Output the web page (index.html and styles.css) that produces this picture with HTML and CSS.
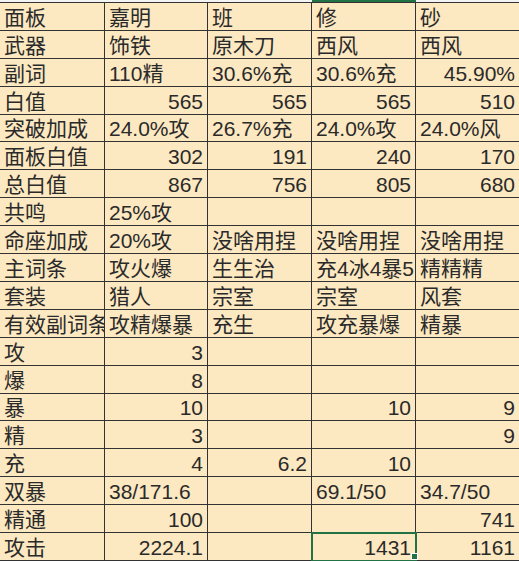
FILE: index.html
```html
<!DOCTYPE html>
<html lang="zh">
<head>
<meta charset="utf-8">
<link rel="stylesheet" href="styles.css">
</head>
<body>
<div class="sheet">
  <div class="colhead">
    <div class="ch"></div><div class="ch"></div><div class="ch"></div><div class="ch ch-sel"></div><div class="ch"></div>
  </div>
  <div class="grid">
    <div class="c">面板</div><div class="c">嘉明</div><div class="c">班</div><div class="c">修</div><div class="c">砂</div>
    <div class="c">武器</div><div class="c">饰铁</div><div class="c">原木刀</div><div class="c">西风</div><div class="c">西风</div>
    <div class="c">副词</div><div class="c">110精</div><div class="c">30.6%充</div><div class="c">30.6%充</div><div class="c r">45.90%</div>
    <div class="c">白值</div><div class="c r">565</div><div class="c r">565</div><div class="c r">565</div><div class="c r">510</div>
    <div class="c">突破加成</div><div class="c">24.0%攻</div><div class="c">26.7%充</div><div class="c">24.0%攻</div><div class="c">24.0%风</div>
    <div class="c">面板白值</div><div class="c r">302</div><div class="c r">191</div><div class="c r">240</div><div class="c r">170</div>
    <div class="c">总白值</div><div class="c r">867</div><div class="c r">756</div><div class="c r">805</div><div class="c r">680</div>
    <div class="c">共鸣</div><div class="c">25%攻</div><div class="c"></div><div class="c"></div><div class="c"></div>
    <div class="c">命座加成</div><div class="c">20%攻</div><div class="c">没啥用捏</div><div class="c">没啥用捏</div><div class="c">没啥用捏</div>
    <div class="c">主词条</div><div class="c">攻火爆</div><div class="c">生生治</div><div class="c">充4冰4暴5</div><div class="c">精精精</div>
    <div class="c">套装</div><div class="c">猎人</div><div class="c">宗室</div><div class="c">宗室</div><div class="c">风套</div>
    <div class="c">有效副词条</div><div class="c">攻精爆暴</div><div class="c">充生</div><div class="c">攻充暴爆</div><div class="c">精暴</div>
    <div class="c">攻</div><div class="c r">3</div><div class="c"></div><div class="c"></div><div class="c"></div>
    <div class="c">爆</div><div class="c r">8</div><div class="c"></div><div class="c"></div><div class="c"></div>
    <div class="c">暴</div><div class="c r">10</div><div class="c"></div><div class="c r">10</div><div class="c r">9</div>
    <div class="c">精</div><div class="c r">3</div><div class="c"></div><div class="c"></div><div class="c r">9</div>
    <div class="c">充</div><div class="c r">4</div><div class="c r">6.2</div><div class="c r">10</div><div class="c"></div>
    <div class="c">双暴</div><div class="c">38/171.6</div><div class="c"></div><div class="c">69.1/50</div><div class="c">34.7/50</div>
    <div class="c">精通</div><div class="c r">100</div><div class="c"></div><div class="c"></div><div class="c r">741</div>
    <div class="c">攻击</div><div class="c r">2224.1</div><div class="c"></div><div class="c r sel">1431</div><div class="c r">1161</div>
  </div>
</div>
</body>
</html>
```
FILE: styles.css
```css
html, body {
  margin: 0;
  padding: 0;
  background: #fce8c1;
}
.sheet {
  width: 519px;
  height: 561px;
  overflow: hidden;
  font-family: "Liberation Sans", "Noto Sans CJK SC", sans-serif;
  font-size: 21px;
  color: #2a2a2a;
}
.colhead {
  display: grid;
  grid-template-columns: 105px 103px 104px 104px 1fr;
  height: 2px;
  background: #f4f4f4;
}
.ch-sel {
  background: #217346;
}
.grid {
  display: grid;
  grid-template-columns: 105px 103px 104px 104px 1fr;
  grid-template-rows: repeat(20, 1fr);
  height: 559px;
  border-top: 1px solid #333;
  box-sizing: border-box;
}
.c {
  box-sizing: border-box;
  border-right: 1px solid #333;
  border-bottom: 1px solid #333;
  display: flex;
  align-items: flex-end;
  padding: 0 4px 1px 4px;
  line-height: 1.1;
  white-space: nowrap;
  overflow: hidden;
  background: #fce8c1;
}
.c:nth-child(5n) {
  border-right: none;
}
.r {
  justify-content: flex-end;
}
.sel {
  position: relative;
  overflow: visible;
  outline: 2px solid #217346;
  outline-offset: -1px;
  z-index: 1;
}
.sel::after {
  content: "";
  position: absolute;
  right: -3px;
  bottom: 0px;
  width: 5px;
  height: 5px;
  background: #217346;
  border: 1px solid #fff;
}
```
